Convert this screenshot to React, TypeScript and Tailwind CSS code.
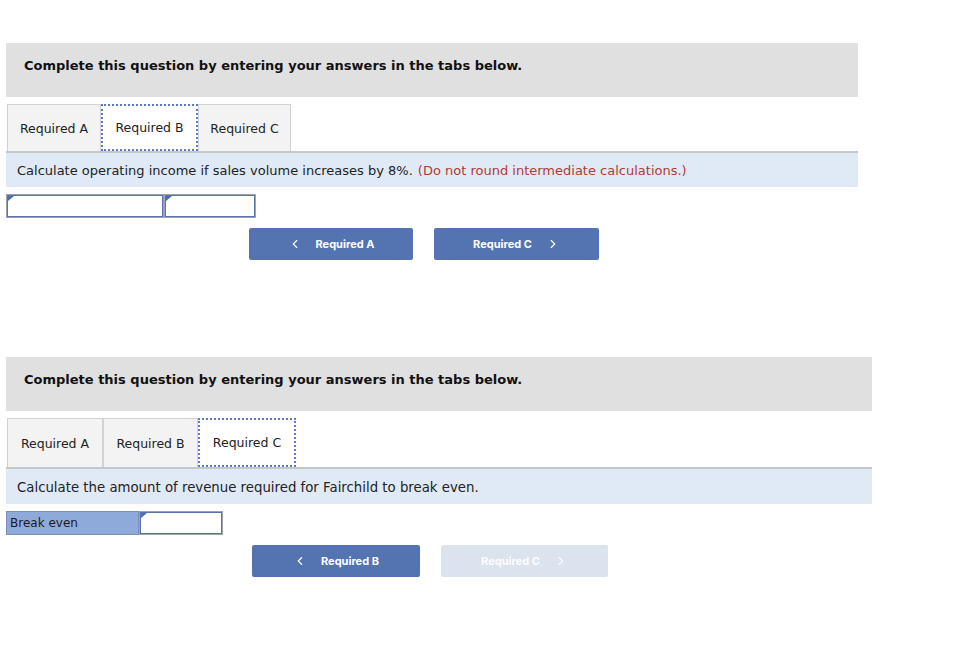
import { ChevronLeft, ChevronRight } from "lucide-react";

type Tab = "A" | "B" | "C";

function Flag() {
  return (
    <span className="absolute left-[1px] top-[1px] h-0 w-0 border-l-[6px] border-b-[5px] border-t-[0px] border-l-[#4a6cb3] border-b-transparent" />
  );
}

function InputCell({ width }: { width: string }) {
  return (
    <div
      className={`relative h-[24px] border border-[#9ea3ab] bg-white shadow-[inset_0_0_0_1px_#5873ae] ${width}`}
    >
      <Flag />
    </div>
  );
}

function NavButton({
  label,
  dir,
  width,
  disabled,
}: {
  label: string;
  dir: "prev" | "next";
  width: number;
  disabled?: boolean;
}) {
  return (
    <button
      type="button"
      disabled={disabled}
      className={`flex h-[32px] items-center justify-center gap-[14px] rounded-[2px] text-[11px] font-bold text-white ${
        disabled ? "bg-[#dce3ef] text-white/90" : "bg-[#5473b1]"
      }`}
      style={{ width, fontFamily: "Inter, 'Liberation Sans', sans-serif" }}
    >
      {dir === "prev" && <ChevronLeft size={14} strokeWidth={2} />}
      <span>{label}</span>
      {dir === "next" && <ChevronRight size={14} strokeWidth={2} />}
    </button>
  );
}

function Tabs({ active, widths, height }: { active: Tab; widths: number[]; height: number }) {
  const tabs: Tab[] = ["A", "B", "C"];
  return (
    <div className="mt-[7px] flex pl-[1px]">
      {tabs.map((t, i) =>
        t === active ? (
          <div
            key={t}
            className="flex items-center justify-center border-2 border-dotted border-[#5b7cc2] bg-white pt-[2px] text-[12.5px] text-[#222]"
            style={{ width: widths[i], height }}
          >
            Required {t}
          </div>
        ) : (
          <div
            key={t}
            className="flex items-center justify-center border border-b-0 border-[#d2d2d2] bg-[#f3f3f3] pt-[2px] text-[12.5px] text-[#222]"
            style={{ width: widths[i], height }}
          >
            Required {t}
          </div>
        )
      )}
    </div>
  );
}

function Header() {
  return (
    <div className="h-[54px] bg-[#e0e0e0] pl-[18px] pt-[16px] text-[13px] font-bold leading-[14px] text-[#111]">
      Complete this question by entering your answers in the tabs below.
    </div>
  );
}

export default function App() {
  return (
    <div
      className="min-h-screen w-[970px] bg-white text-[#222]"
      style={{ fontFamily: "Verdana, 'DejaVu Sans', sans-serif" }}
    >
      {/* First question */}
      <div className="ml-[6px] w-[852px] pt-[43px]">
        <Header />
        <Tabs active="B" widths={[94, 97, 93]} height={47} />
        <div className="flex h-[36px] items-center border-t-2 border-[#c4c7cc] bg-[#dfeaf6] pl-[11px] pt-[2px] text-[13px]">
          <span>Calculate operating income if sales volume increases by 8%.</span>
          <span className="ml-[5px] text-[#b03b32]">(Do not round intermediate calculations.)</span>
        </div>
        <div className="mt-[7px] flex">
          <InputCell width="w-[158px]" />
          <InputCell width="w-[92px]" />
        </div>
        <div className="ml-[243px] mt-[10px] flex gap-[21px]">
          <NavButton label="Required A" dir="prev" width={164} />
          <NavButton label="Required C" dir="next" width={165} />
        </div>
      </div>

      {/* Second question */}
      <div className="ml-[6px] mt-[97px] w-[866px]">
        <Header />
        <Tabs active="C" widths={[96, 95, 98]} height={49} />
        <div className="flex h-[37px] items-center border-t-2 border-[#c4c7cc] bg-[#dfeaf6] pl-[11px] pt-[2px] text-[13.3px]">
          Calculate the amount of revenue required for Fairchild to break even.
        </div>
        <div className="mt-[7px] flex">
          <div className="flex h-[24px] w-[133px] items-center border border-[#7d8fb8] bg-[#8eaadb] pl-[3px] text-[12px] text-[#1b1b1b]">
            Break even
          </div>
          <InputCell width="w-[84px]" />
        </div>
        <div className="ml-[246px] mt-[10px] flex gap-[21px]">
          <NavButton label="Required B" dir="prev" width={168} />
          <NavButton label="Required C" dir="next" width={167} disabled />
        </div>
      </div>
    </div>
  );
}
